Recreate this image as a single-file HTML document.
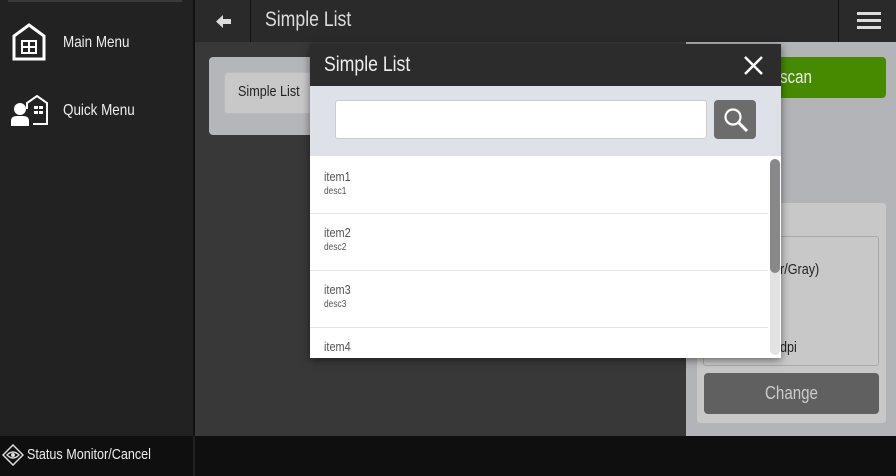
<!DOCTYPE html>
<html><head><meta charset="utf-8"><style>
*{margin:0;padding:0;box-sizing:border-box}
body{width:896px;height:476px;overflow:hidden;position:relative;background:#383838;font-family:"Liberation Sans",sans-serif;}
.abs{position:absolute;white-space:nowrap}
.n{transform:scaleX(.84);transform-origin:0 0}
</style></head><body>
<!-- sidebar -->
<div class="abs" style="left:0;top:0;width:193px;height:436px;background:#222"></div>
<div class="abs" style="left:8px;top:0;width:174px;height:2px;background:#3a3a3a"></div>
<div class="abs" style="left:193px;top:0;width:2px;height:476px;background:#111"></div>
<svg class="abs" style="left:12px;top:23px" width="34" height="38" viewBox="0 0 34 38"><path d="M2 36V13L17 2L32 13V36Z" fill="none" stroke="#fff" stroke-width="3"/><rect x="9" y="17" width="16" height="14" fill="#fff"/><rect x="11" y="19" width="5" height="4" fill="#222"/><rect x="18" y="19" width="5" height="4" fill="#222"/><rect x="11" y="25" width="5" height="4" fill="#222"/><rect x="18" y="25" width="5" height="4" fill="#222"/></svg>
<div class="abs n" style="left:63px;top:34px;color:#eee;font-size:16px">Main Menu</div>
<svg class="abs" style="left:10px;top:95px" width="40" height="32" viewBox="0 0 40 32"><circle cx="10" cy="14" r="6" fill="#fff"/><path d="M1 31V26Q1 21 7 21H13Q19 21 19 26V31Z" fill="#fff"/><path d="M17 14V8L27 1L37 8V29H23" fill="none" stroke="#fff" stroke-width="2"/><rect x="24" y="11" width="4" height="3" fill="#fff"/><rect x="29" y="11" width="4" height="3" fill="#fff"/><rect x="24" y="16" width="4" height="3" fill="#fff"/><rect x="29" y="16" width="4" height="3" fill="#fff"/></svg>
<div class="abs n" style="left:63px;top:102px;color:#eee;font-size:16px">Quick Menu</div>
<!-- top bar -->
<div class="abs" style="left:195px;top:0;width:701px;height:42px;background:#2a2a2a"></div>
<div class="abs" style="left:250px;top:0;width:1px;height:42px;background:#111"></div>
<div class="abs" style="left:838px;top:0;width:1px;height:42px;background:#111"></div>
<svg class="abs" style="left:216px;top:15px" width="16" height="13"><path d="M0 6.5L7 0V4H15V9H7V13Z" fill="#ddd"/></svg>
<div class="abs n" style="left:265px;top:8px;color:#ddd;font-size:21px">Simple List</div>
<div class="abs" style="left:857px;top:12px;width:24px;height:3px;background:#ddd;box-shadow:0 7px 0 #ddd,0 14px 0 #ddd"></div>
<!-- content -->
<div class="abs" style="left:209px;top:57px;width:120px;height:78px;background:#b5b6b9;border-radius:4px"></div>
<div class="abs" style="left:224px;top:72px;width:100px;height:42px;background:#c8c8c8;border-radius:4px;border:1px solid #bbb"></div>
<div class="abs n" style="left:238px;top:83px;color:#222;font-size:15px">Simple List</div>
<!-- right panel -->
<div class="abs" style="left:686px;top:42px;width:210px;height:394px;background:#b3b4b8"></div>
<div class="abs" style="left:700px;top:57px;width:186px;height:41px;background:#468a00;border-radius:4px"></div>
<div class="abs n" style="left:780px;top:67px;color:#eee;font-size:18px">scan</div>
<div class="abs" style="left:697px;top:203px;width:189px;height:220px;background:#c8c8c8;border-radius:3px"></div>
<div class="abs" style="left:703px;top:236px;width:176px;height:130px;border:1px solid #a9a9a9;border-radius:3px"></div>
<div class="abs n" style="left:780px;top:261px;color:#222;font-size:15px">r/Gray)</div>
<div class="abs n" style="left:780px;top:339px;color:#222;font-size:15px">dpi</div>
<div class="abs" style="left:704px;top:373px;width:175px;height:41px;background:#606060;border-radius:4px"></div>
<div class="abs n" style="left:765px;top:383px;color:#ccc;font-size:18px">Change</div>
<!-- bottom -->
<div class="abs" style="left:0;top:436px;width:896px;height:40px;background:#0f0f0f"></div>
<div class="abs" style="left:193px;top:436px;width:2px;height:40px;background:#222"></div>
<svg class="abs" style="left:2px;top:444px" width="22" height="22" viewBox="0 0 22 22"><path d="M11 1L21 11L11 21L1 11Z" fill="none" stroke="#ddd" stroke-width="1.5"/><path d="M5 11Q11 5 17 11Q11 17 5 11Z" fill="none" stroke="#ddd" stroke-width="1.3"/><circle cx="11" cy="11" r="2" fill="#ddd"/></svg>
<div class="abs n" style="left:27px;top:446px;color:#eee;font-size:15px">Status Monitor/Cancel</div>
<!-- modal -->
<div class="abs" style="left:310px;top:44px;width:471px;height:314px;background:#fff;box-shadow:0 2px 8px rgba(0,0,0,.5)"></div>
<div class="abs" style="left:310px;top:44px;width:471px;height:42px;background:#2c2c2c"></div>
<div class="abs n" style="left:324px;top:53px;color:#eee;font-size:21px">Simple List</div>
<svg class="abs" style="left:743px;top:55px" width="21" height="21"><path d="M2 2L19 19M19 2L2 19" stroke="#fff" stroke-width="2.5"/></svg>
<div class="abs" style="left:310px;top:86px;width:471px;height:70px;background:#dfe1e8"></div>
<div class="abs" style="left:335px;top:100px;width:372px;height:39px;background:#fff;border-radius:3px;border:1px solid #ccc"></div>
<div class="abs" style="left:714px;top:100px;width:42px;height:39px;background:#6c6c6c;border-radius:4px"></div>
<svg class="abs" style="left:722px;top:106px" width="28" height="28"><circle cx="11" cy="11" r="7.5" fill="none" stroke="#fff" stroke-width="2.2"/><path d="M16 16L25 25" stroke="#fff" stroke-width="3"/></svg>
<div class="abs" style="left:310px;top:157px;width:458px;height:200px;color:#555">
<div style="height:57px;border-bottom:1px solid #e5e5e5;padding:12px 0 0 14px"><div class="n" style="font-size:13px">item1</div><div class="n" style="font-size:10px;margin-top:2px">desc1</div></div>
<div style="height:57px;border-bottom:1px solid #e5e5e5;padding:11px 0 0 14px"><div class="n" style="font-size:13px">item2</div><div class="n" style="font-size:10px;margin-top:2px">desc2</div></div>
<div style="height:57px;border-bottom:1px solid #e5e5e5;padding:11px 0 0 14px"><div class="n" style="font-size:13px">item3</div><div class="n" style="font-size:10px;margin-top:2px">desc3</div></div>
<div style="padding:11px 0 0 14px"><div class="n" style="font-size:13px">item4</div></div>
</div>
<div class="abs" style="left:770px;top:159px;width:10px;height:196px;background:#e2e2e2;border-radius:5px"></div>
<div class="abs" style="left:770px;top:159px;width:10px;height:114px;background:#888;border-radius:5px"></div>
</body></html>
